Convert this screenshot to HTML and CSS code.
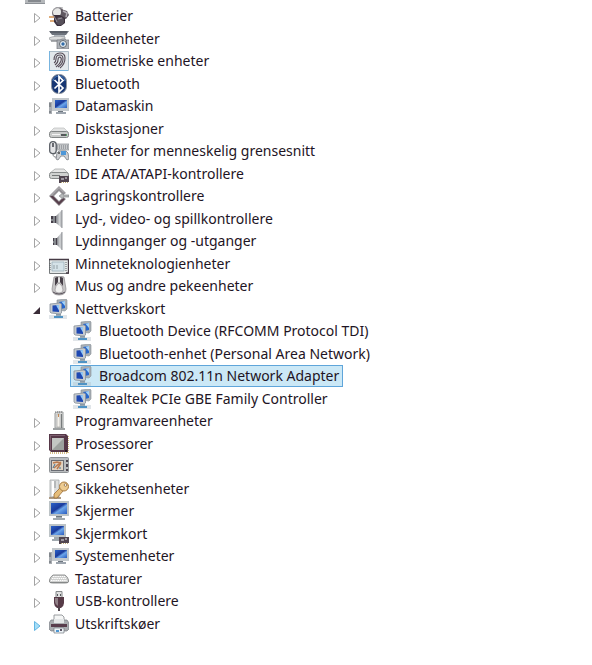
FILE: index.html
```html
<!DOCTYPE html>
<html lang="no">
<head>
    <meta charset="UTF-8">
    <meta name="viewport" content="width=device-width, initial-scale=1.0">
    <title>Enhetsbehandling</title>
    <link rel="stylesheet" href="styles.css">
</head>
<body>
    <!-- Shared icons -->
    <svg class="defs" aria-hidden="true">
        <defs>
            <linearGradient id="screen" x1="0" y1="0" x2="1" y2="1">
                <stop offset="0" stop-color="#2c62c8"/>
                <stop offset=".45" stop-color="#1b3b9c"/>
                <stop offset=".6" stop-color="#6da6ea"/>
                <stop offset="1" stop-color="#2a5cc0"/>
            </linearGradient>
            <linearGradient id="metal" x1="0" y1="0" x2="1" y2="0">
                <stop offset="0" stop-color="#808388"/>
                <stop offset=".6" stop-color="#d4d6d8"/>
                <stop offset="1" stop-color="#a3a6aa"/>
            </linearGradient>
            <symbol id="arrow" viewBox="0 0 12 12">
                <path d="M3.500 1.500v9l5.500-4.500z" fill="#fff" stroke="#a4a4a4"/>
            </symbol>
            <symbol id="computer" viewBox="0 0 20 20">
                <path d="M0 6h3v12H0z" fill="#a9adb2"/>
                <path d="M1 7v4M1 15v2" stroke="#5d6269"/>
                <path d="M3 2h17v13H3z" fill="#c3c8cc"/>
                <path d="M6 4h12v8H6z" fill="url(#screen)"/>
                <path d="M9 15h5v1h3v2H7v-2h2z" fill="#9da5ae"/>
                <path d="M9 15.500h5" stroke="#6d7680"/>
            </symbol>
            <symbol id="network" viewBox="0 0 20 20">
                <path d="M8 1l9-1 1 1v9l-2 2-8-1z" fill="#a9b0b6" stroke="#868e96" stroke-width=".6"/>
                <path d="M10 3l6-1v7l-4 1z" fill="#2766cc"/>
                <path d="M12.500 2.800L16 2v5z" fill="#a3d2f7"/>
                <path d="M1 5l10-1 1.500 1v9L11 15l-9-1-1-1z" fill="#c6cbcf" stroke="#88919a" stroke-width=".8"/>
                <path d="M3.500 6.500l6.500-.500v7l-6.500-.500z" fill="#1e48b2"/>
                <path d="M7 6.200l3-.200v5.500z" fill="#93c8f5"/>
                <path d="M7 15h5v2H7z" fill="#8b9aa6"/>
                <path d="M0 17h18M0 19h18" stroke="#b4bfc8" stroke-width=".8"/>
                <path d="M5 17h9v2H5z" fill="#4f93c4"/>
            </symbol>
        </defs>
    </svg>

    <div class="root-node">
        <svg viewBox="0 0 20 5" aria-hidden="true">
            <path d="M0 0h20v4H0z" fill="#b5b8bb"/>
            <path d="M3 0h13v2H3z" fill="#85898e"/>
            <path d="M0 3.500h20" stroke="#8e9297"/>
        </svg>
    </div>

    <ul class="tree" role="tree" aria-label="Enheter">
        <li class="row" role="treeitem">
            <button class="toggle" aria-label="Utvid Batterier"><svg><use href="#arrow"/></svg></button>
            <svg class="icon" viewBox="0 0 20 20">
                <circle cx="9" cy="7" r="6" fill="#77737a"/>
                <circle cx="8" cy="6" r="4" fill="#e7e7e6"/>
                <path d="M4 5Q7 0 14 2" fill="none" stroke="#a6a6a9"/>
                <path d="M12 3l6 2 2 4-3 4-5-1z" fill="#5f5760"/>
                <path d="M14 5l4 2-1 4" fill="none" stroke="#b5b0b8" stroke-width="1.500"/>
                <path d="M0 11h5M1 15h5" stroke="#d39150" stroke-width="1.600"/>
                <path d="M5 9h6l5 3v5l-4 3H8l-3-4z" fill="#3b303c"/>
                <circle cx="11" cy="15" r="4" fill="#57505a"/>
                <path d="M5 10l3 6M9 13l4-1" stroke="#96909a"/>
            </svg>
            <span class="label">Batterier</span>
        </li>
        <li class="row" role="treeitem">
            <button class="toggle" aria-label="Utvid Bildeenheter"><svg><use href="#arrow"/></svg></button>
            <svg class="icon" viewBox="0 0 20 20">
                <path d="M0 2h20l-3 4H3z" fill="#6e747d"/>
                <path d="M1 3h17" stroke="#464b55"/>
                <path d="M5 6h11v2H5z" fill="#b2b8bf"/>
                <path d="M0 9q6-3 16-1v3H1z" fill="#dcdddd" stroke="#96999d" stroke-width=".7"/>
                <path d="M2 12h8" stroke="#595c62"/>
                <path d="M8 11h3l2-1h3l1 1h3v9H8z" fill="#afb3b8" stroke="#72777d" stroke-width=".7"/>
                <circle cx="14" cy="15" r="3.500" fill="#eaf1f5" stroke="#5f666e"/>
                <circle cx="14" cy="15" r="1.700" fill="#326ca8"/>
            </svg>
            <span class="label">Bildeenheter</span>
        </li>
        <li class="row" role="treeitem">
            <button class="toggle" aria-label="Utvid Biometriske enheter"><svg><use href="#arrow"/></svg></button>
            <svg class="icon" viewBox="0 0 20 20">
                <path d="M.500.500h19v19H.500z" fill="#e3e8eb" stroke="#aebdc7"/>
                <path d="M.500 0v19.500H19" fill="none" stroke="#77b4df"/>
                <g fill="none" stroke="#574d58" stroke-width="1.100">
                    <path d="M5 9Q5 2 11 2q5 0 5 5 0 6-5 10"/>
                    <path d="M5 12q2-1 2-4 0-4 4-4 3 0 3 4 0 5-5 8"/>
                    <path d="M6 14q3-2 3-5 0-3 2-3 2 1 1 4-1 3-5 6"/>
                </g>
            </svg>
            <span class="label">Biometriske enheter</span>
        </li>
        <li class="row" role="treeitem">
            <button class="toggle" aria-label="Utvid Bluetooth"><svg><use href="#arrow"/></svg></button>
            <svg class="icon" viewBox="0 0 20 20">
                <rect x="2.500" y=".500" width="15" height="19" rx="7" fill="#173673" stroke="#8f96a0"/>
                <path d="M4 7Q5 2 10 2t6 5" fill="none" stroke="#477bbb"/>
                <path d="M5.500 6l8.500 8-4 4V2.500l4 4-8.500 8" fill="none" stroke="#fff" stroke-width="1.700"/>
            </svg>
            <span class="label">Bluetooth</span>
        </li>
        <li class="row" role="treeitem">
            <button class="toggle" aria-label="Utvid Datamaskin"><svg><use href="#arrow"/></svg></button>
            <svg class="icon"><use href="#computer"/></svg>
            <span class="label">Datamaskin</span>
        </li>
        <li class="row" role="treeitem">
            <button class="toggle" aria-label="Utvid Diskstasjoner"><svg><use href="#arrow"/></svg></button>
            <svg class="icon" viewBox="0 0 20 20">
                <path d="M1 13l4-4h10l4 4z" fill="#e3e4e4" stroke="#babdbd" stroke-width=".7"/>
                <rect x=".500" y="12.500" width="19" height="6" rx="2" fill="#c8cac9" stroke="#818585"/>
                <path d="M3 15.500h8" stroke="#f5f5f5"/>
                <path d="M12 15h5v2h-5z" fill="#55595b"/>
                <path d="M17 15h1v2h-1z" fill="#5aa368"/>
            </svg>
            <span class="label">Diskstasjoner</span>
        </li>
        <li class="row" role="treeitem">
            <button class="toggle" aria-label="Utvid Enheter for menneskelig grensesnitt"><svg><use href="#arrow"/></svg></button>
            <svg class="icon" viewBox="0 0 20 20">
                <path d="M7 3h13v6H7z" fill="#c7c9cb" stroke="#8a8e92" stroke-width=".7"/>
                <path d="M8 5h11M8 7h11" stroke="#747980" stroke-dasharray="1 1"/>
                <rect x=".700" y=".700" width="6.500" height="12" rx="3" fill="#e3e4e6" stroke="#5b6067" stroke-width="1.300"/>
                <path d="M4 2v4" stroke="#3e4148" stroke-width="1.500"/>
                <path d="M4 13q0 4 5 3" fill="none" stroke="#777b81"/>
                <path d="M10 10h7l2 2 1 6-2 1-3-4h-3l-3 4-2-1 1-6z" fill="#cfd1d4" stroke="#777b81" stroke-width=".8"/>
                <path d="M12 10h5v4h-5z" fill="#4d97d8"/>
                <path d="M9 12h2M10 11v2" stroke="#444"/>
            </svg>
            <span class="label">Enheter for menneskelig grensesnitt</span>
        </li>
        <li class="row" role="treeitem">
            <button class="toggle" aria-label="Utvid IDE ATA/ATAPI-kontrollere"><svg><use href="#arrow"/></svg></button>
            <svg class="icon" viewBox="0 0 20 20">
                <path d="M1 9l5-4h9l4 4z" fill="#e6e6e6" stroke="#a8abab" stroke-width=".8"/>
                <rect x=".500" y="8.500" width="19" height="6" rx="2" fill="#d0d2d1" stroke="#868a8a"/>
                <path d="M3 11.500h8" stroke="#747878"/>
                <path d="M10 12h10v6h-8v1h-2z" fill="#514651"/>
                <path d="M12 14h3v2h-3zM16 13h2v2h-2z" fill="#9e98a1"/>
                <path d="M12 18.500h7" stroke="#bba774" stroke-dasharray="1 1"/>
            </svg>
            <span class="label">IDE ATA/ATAPI-kontrollere</span>
        </li>
        <li class="row" role="treeitem">
            <button class="toggle" aria-label="Utvid Lagringskontrollere"><svg><use href="#arrow"/></svg></button>
            <svg class="icon" viewBox="0 0 20 20">
                <path d="M10 0l7 7-3 2-4-4-5 5 5 5 4-4 3 2-7 7L0 10z" fill="#918e92"/>
                <path d="M1 10l9 9 6-6-2-1-4 4-6-6z" fill="#583f4c"/>
                <path d="M2 9.500l8-8 5 5" fill="none" stroke="#bcbabd"/>
                <path d="M20 9h-6V7l-4 3 4 3v-2h6z" fill="#b8babb" stroke="#88898d" stroke-width=".7"/>
            </svg>
            <span class="label">Lagringskontrollere</span>
        </li>
        <li class="row" role="treeitem">
            <button class="toggle" aria-label="Utvid Lyd-, video- og spillkontrollere"><svg><use href="#arrow"/></svg></button>
            <svg class="icon" viewBox="0 0 20 20">
                <path d="M2 7h5v7H2z" fill="#85888d"/>
                <path d="M2 7h2v3H2zM2 12h2v2H2zM6 7h1v7H6z" fill="#453f49"/>
                <path d="M7 7l6-6v18l-6-5z" fill="url(#metal)"/>
                <path d="M13 1v18" stroke="#96999d"/>
            </svg>
            <span class="label">Lyd-, video- og spillkontrollere</span>
        </li>
        <li class="row" role="treeitem">
            <button class="toggle" aria-label="Utvid Lydinnganger og -utganger"><svg><use href="#arrow"/></svg></button>
            <svg class="icon" viewBox="0 0 20 20">
                <path d="M4 7h4v7H4z" fill="#85888d"/>
                <path d="M4 7h1v3H4zM4 12h1v2H4zM7 7h1v7H7z" fill="#453f49"/>
                <path d="M8 7l5-6v18l-5-5z" fill="url(#metal)"/>
                <path d="M13 1v18" stroke="#96999d"/>
            </svg>
            <span class="label">Lydinnganger og -utganger</span>
        </li>
        <li class="row" role="treeitem">
            <button class="toggle" aria-label="Utvid Minneteknologienheter"><svg><use href="#arrow"/></svg></button>
            <svg class="icon" viewBox="0 0 20 20">
                <path d="M.500 5.500h19v14H.500z" fill="#e5e9e9" stroke="#777b7d"/>
                <path d="M0 5.500h19.500V19H17" fill="none" stroke="#463b45" stroke-width="1.300"/>
                <path d="M3 8h12v9H3z" fill="#d5e2e8" stroke="#9fb2bd" stroke-width=".8"/>
                <path d="M4 12h6M4 14h6" stroke="#93a0a6" stroke-dasharray="2 1"/>
                <path d="M1 9v8M17 8v10" stroke="#5b5e62" stroke-dasharray="1 1"/>
            </svg>
            <span class="label">Minneteknologienheter</span>
        </li>
        <li class="row" role="treeitem">
            <button class="toggle" aria-label="Utvid Mus og andre pekeenheter"><svg><use href="#arrow"/></svg></button>
            <svg class="icon" viewBox="0 0 20 20">
                <path d="M5 1q5-2 10 0l2 12q0 6-7 6t-7-6z" fill="#c5c4c5" stroke="#8c898d" stroke-width=".7"/>
                <path d="M6 2q1-1 3-1v5l-3 4zM11 1q2 0 3 1v8l-3-4z" fill="#463f47"/>
                <path d="M10 2v4" stroke="#eee" stroke-width="1.500"/>
                <path d="M10 7q4 3 4 7 0 3-4 3t-4-3q0-4 4-7z" fill="#f0f0ef" stroke="#969297" stroke-width=".7"/>
                <path d="M4 16q6 4 12 0" fill="none" stroke="#58515a"/>
            </svg>
            <span class="label">Mus og andre pekeenheter</span>
        </li>
        <li class="row" role="treeitem" aria-expanded="true">
            <button class="toggle" aria-label="Skjul Nettverkskort"><svg viewBox="0 0 12 12"><path d="M9 2v7H2z" fill="#3a2c38"/></svg></button>
            <svg class="icon"><use href="#network"/></svg>
            <span class="label">Nettverkskort</span>
        </li>
        <li class="row child" role="treeitem">
            <a class="device" href="#">
                <svg class="icon"><use href="#network"/></svg>
                <span class="label">Bluetooth Device (RFCOMM Protocol TDI)</span>
            </a>
        </li>
        <li class="row child" role="treeitem">
            <a class="device" href="#">
                <svg class="icon"><use href="#network"/></svg>
                <span class="label">Bluetooth-enhet (Personal Area Network)</span>
            </a>
        </li>
        <li class="row child" role="treeitem" aria-selected="true">
            <a class="device selected" href="#">
                <svg class="icon"><use href="#network"/></svg>
                <span class="label">Broadcom 802.11n Network Adapter</span>
            </a>
        </li>
        <li class="row child" role="treeitem">
            <a class="device" href="#">
                <svg class="icon"><use href="#network"/></svg>
                <span class="label">Realtek PCIe GBE Family Controller</span>
            </a>
        </li>
        <li class="row" role="treeitem">
            <button class="toggle" aria-label="Utvid Programvareenheter"><svg><use href="#arrow"/></svg></button>
            <svg class="icon" viewBox="0 0 20 20">
                <path d="M6 2l2-1h6v16H6z" fill="#dadbda" stroke="#9a9d9d"/>
                <path d="M6 1h8" stroke="#6e7172" stroke-dasharray="1 1"/>
                <path d="M8 3h3v13H8z" fill="#f5f3ee" stroke="#aaa9a6" stroke-width=".7"/>
                <path d="M9.500 3v3" stroke="#c18652"/>
                <path d="M12.500 3v14" stroke="#777b7c"/>
                <path d="M4 17h12v2H4z" fill="#9da1a2"/>
            </svg>
            <span class="label">Programvareenheter</span>
        </li>
        <li class="row" role="treeitem">
            <button class="toggle" aria-label="Utvid Prosessorer"><svg><use href="#arrow"/></svg></button>
            <svg class="icon" viewBox="0 0 20 20">
                <path d="M1 19h18V2" fill="none" stroke="#c9aa61" stroke-width="1.500" stroke-dasharray="1 1"/>
                <path d="M0 0h17l2 2v16H2l-2-2z" fill="#563848"/>
                <path d="M1 1h15v1H2v14H1z" fill="#7e6070"/>
                <path d="M3 4h12v12H3z" fill="#9da19e"/>
                <path d="M3 16V4h12z" fill="#c3c6c3"/>
                <path d="M16 16h2v2h-2z" fill="#261a22"/>
            </svg>
            <span class="label">Prosessorer</span>
        </li>
        <li class="row" role="treeitem">
            <button class="toggle" aria-label="Utvid Sensorer"><svg><use href="#arrow"/></svg></button>
            <svg class="icon" viewBox="0 0 20 20">
                <rect x=".500" y="1.500" width="19" height="15" rx="1" fill="#b9bcbe" stroke="#8f9396"/>
                <path d="M2 4h13v11H2z" fill="#6a6d74"/>
                <path d="M3 5h11v9H3z" fill="#e0d3c2"/>
                <path d="M5 12l7-6M4 7l4-1 4 1M8 13l4-6" stroke="#b97a4f" stroke-width="1.500"/>
                <path d="M6 8l-2 4M11 11v2" stroke="#417194"/>
                <path d="M17 4h2v2h-2zM17 8h2v3h-2zM17 13h2v2h-2z" fill="#4e4650"/>
            </svg>
            <span class="label">Sensorer</span>
        </li>
        <li class="row" role="treeitem">
            <button class="toggle" aria-label="Utvid Sikkehetsenheter"><svg><use href="#arrow"/></svg></button>
            <svg class="icon" viewBox="0 0 20 20">
                <path d="M1 1h9v17H1z" fill="#dddfdf" stroke="#a5a8a9" stroke-width=".8"/>
                <path d="M4 2v15" stroke="#fff" stroke-width="2"/>
                <path d="M6 2v7" stroke="#8e9395"/>
                <path d="M0 19h12" stroke="#90785b" stroke-width="1.500"/>
                <path d="M11 9l3 3-6 7H5v-4z" fill="#e5bd7b" stroke="#9b6d36" stroke-width=".8"/>
                <circle cx="15" cy="7.500" r="4.500" fill="#edcb91" stroke="#a77a40"/>
                <circle cx="16.500" cy="6" r="1.300" fill="#fff" stroke="#805a30" stroke-width=".7"/>
            </svg>
            <span class="label">Sikkehetsenheter</span>
        </li>
        <li class="row" role="treeitem">
            <button class="toggle" aria-label="Utvid Skjermer"><svg><use href="#arrow"/></svg></button>
            <svg class="icon" viewBox="0 0 20 20">
                <path d="M0 0h20v15H0z" fill="#bcc3c6"/>
                <path d="M2 2h16v11H2z" fill="url(#screen)"/>
                <path d="M7 15h6v2h3v2H4v-2h3z" fill="#a1a9af"/>
                <path d="M7 15.500h6" stroke="#70797f"/>
            </svg>
            <span class="label">Skjermer</span>
        </li>
        <li class="row" role="treeitem">
            <button class="toggle" aria-label="Utvid Skjermkort"><svg><use href="#arrow"/></svg></button>
            <svg class="icon" viewBox="0 0 20 20">
                <path d="M0 0h17v13H0z" fill="#bcc3c6"/>
                <path d="M2 2h13v9H2z" fill="url(#screen)"/>
                <path d="M5 13h6v2h2v2H3v-2h2z" fill="#a1a9af"/>
                <path d="M10 13h10v6h-8v1h-2z" fill="#514651"/>
                <path d="M12 15h3v2h-3zM16 14h2v2h-2z" fill="#9e98a1"/>
                <path d="M12 19.500h7" stroke="#bba774" stroke-dasharray="1 1"/>
            </svg>
            <span class="label">Skjermkort</span>
        </li>
        <li class="row" role="treeitem">
            <button class="toggle" aria-label="Utvid Systemenheter"><svg><use href="#arrow"/></svg></button>
            <svg class="icon"><use href="#computer"/></svg>
            <span class="label">Systemenheter</span>
        </li>
        <li class="row" role="treeitem">
            <button class="toggle" aria-label="Utvid Tastaturer"><svg><use href="#arrow"/></svg></button>
            <svg class="icon" viewBox="0 0 20 20">
                <path d="M4 6h12q3 2 3.500 5v2q-1 1-3 1h-13q-2 0-3-1v-2Q1 8 4 6z" fill="#cfd0cf" stroke="#888a8a" stroke-width=".9"/>
                <path d="M4 7.500h12M3 9.500h14M2 11.500h16" stroke="#fff" stroke-dasharray="1.500 .700"/>
                <path d="M1 13.500h18" stroke="#858888"/>
            </svg>
            <span class="label">Tastaturer</span>
        </li>
        <li class="row" role="treeitem">
            <button class="toggle" aria-label="Utvid USB-kontrollere"><svg><use href="#arrow"/></svg></button>
            <svg class="icon" viewBox="0 0 20 20">
                <path d="M7 .500h6v6H7z" fill="#dfe0e0" stroke="#85888a"/>
                <path d="M8 3h1v2H8zM11 3h1v2h-1z" fill="#55585b"/>
                <path d="M5 6h10v6q0 3-3 5H8q-3-2-3-5z" fill="#573b48"/>
                <path d="M6 7h3v8q-3-2-3-4z" fill="#908087"/>
                <path d="M10 16v4" stroke="#50464d" stroke-width="2"/>
            </svg>
            <span class="label">USB-kontrollere</span>
        </li>
        <li class="row" role="treeitem">
            <button class="toggle" aria-label="Utvid Utskriftskøer"><svg viewBox="0 0 12 12"><path d="M3.500 1.500v9l5.500-4.500z" fill="#a5def8" stroke="#62b5e2"/></svg></button>
            <svg class="icon" viewBox="0 0 20 20">
                <path d="M5 1h8l2 2v6H5z" fill="#f5f6f6" stroke="#8e9295" stroke-width=".9"/>
                <path d="M2 6h16l2 3v6l-2 2H2l-2-2V9z" fill="#aaadb1" stroke="#777b81" stroke-width=".7"/>
                <path d="M5 5h10v4H5z" fill="#e4e7e8"/>
                <path d="M2 10h16v3H2z" fill="#583c4c"/>
                <path d="M5 14h10v5H5z" fill="#edf3f7" stroke="#777b81" stroke-width=".7"/>
                <path d="M7 16h3v2H7z" fill="#4d97d2"/>
                <path d="M11 15h2v2h-2z" fill="#5b5564"/>
            </svg>
            <span class="label">Utskriftskøer</span>
        </li>
    </ul>
</body>
</html>
```
FILE: styles.css
```css
* {
    box-sizing: border-box;
}

body {
    font-family: "Noto Sans", "Open Sans", sans-serif;
    font-size: 14px;
    line-height: 20px;
    color: #1e1424;
    background-color: #fff;
    margin: 0;
    padding-bottom: 30px;
    min-height: 100vh;
    display: flex;
    flex-direction: column;
}

.defs {
    position: absolute;
    width: 0;
    height: 0;
}

.root-node {
    height: 5px;
    padding-left: 25px;
}

.root-node svg {
    display: block;
    width: 20px;
    height: 5px;
}

.tree {
    flex: 1;
    display: grid;
    grid-auto-rows: 1fr;
    list-style: none;
    margin: 0;
    padding: 0 0 0 31px;
}

.row {
    display: flex;
    align-items: center;
    gap: 6px;
    white-space: nowrap;
}

.toggle {
    width: 12px;
    height: 16px;
    border: none;
    background: none;
    padding: 4px 0 0;
    cursor: pointer;
}

.toggle svg {
    display: block;
    width: 12px;
    height: 12px;
}

.icon {
    width: 20px;
    height: 20px;
    flex-shrink: 0;
}

.child {
    padding-left: 39px;
}

.device {
    display: flex;
    align-items: center;
    gap: 6px;
    border: 1px solid transparent;
    padding: 0 3px 0 2px;
    color: inherit;
    text-decoration: none;
}

.device.selected {
    background-color: #cbe8f6;
    border-color: #5fa5da;
}
```
